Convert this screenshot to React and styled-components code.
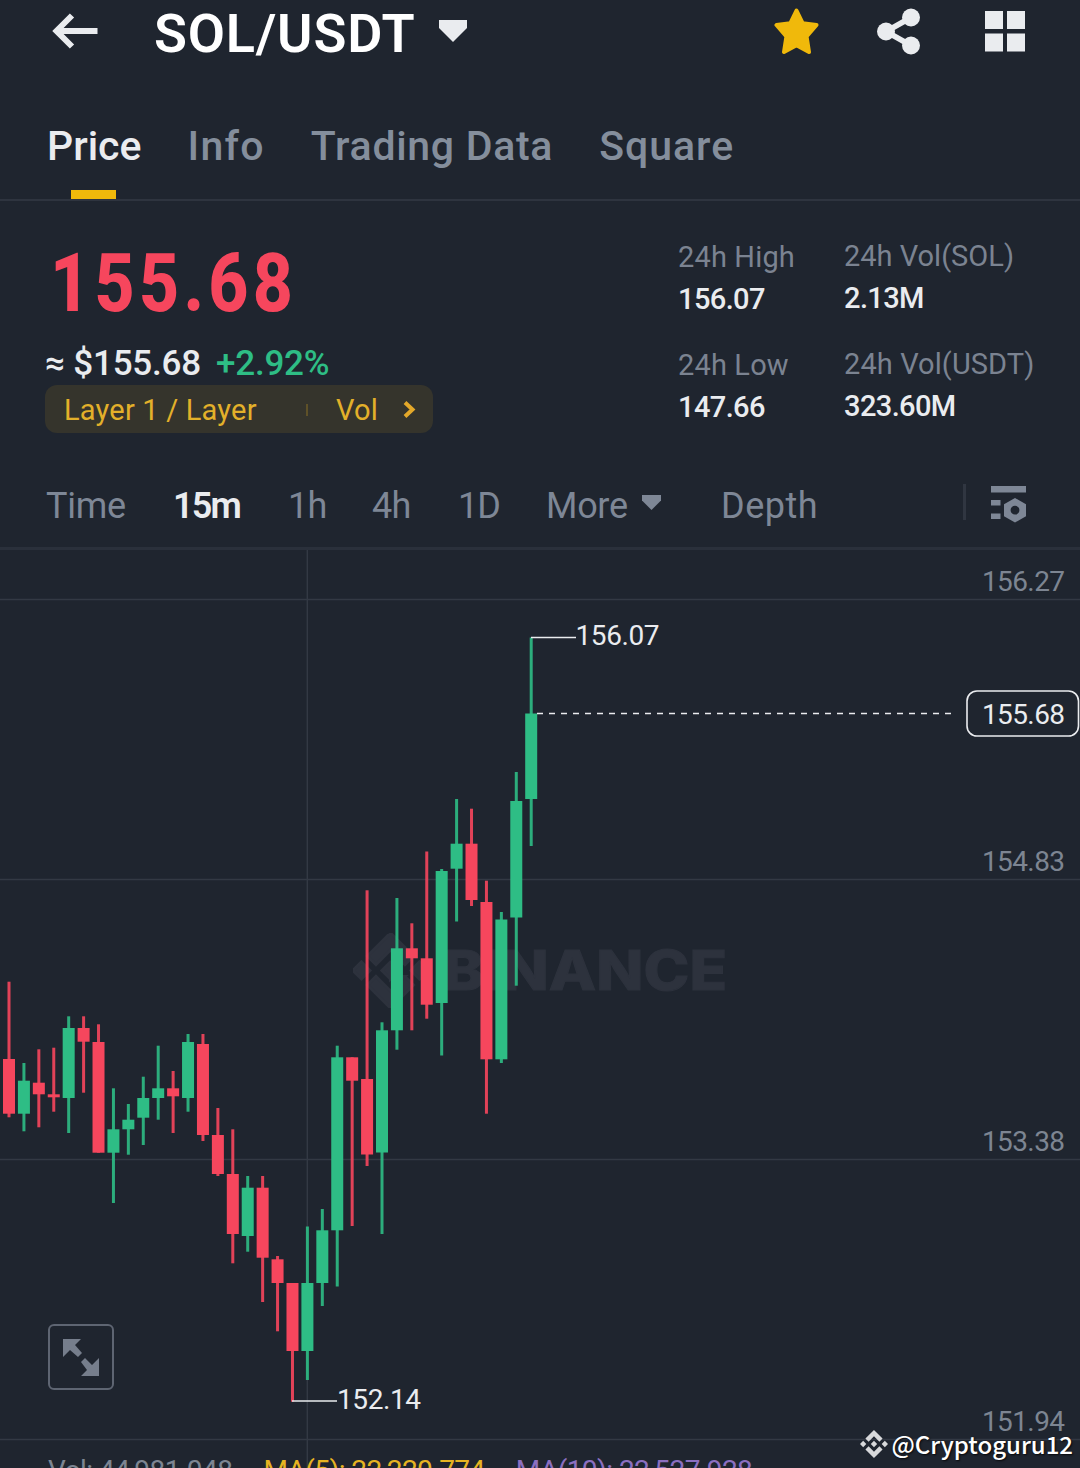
import React from 'react';
import styled, { createGlobalStyle } from 'styled-components';
import { SiBinance } from 'react-icons/si';

const GlobalStyle = createGlobalStyle`
  * {
    box-sizing: border-box;
  }
  body {
    margin: 0;
    background: #1f252f;
  }
`;

const Container = styled.div`
  display: flex;
  flex-direction: column;
  width: 1080px;
  height: 1468px;
  overflow: hidden;
  background: #1f252f;
  color: #eaecef;
  font-family: Roboto, 'Liberation Sans', sans-serif;
  white-space: nowrap;
`;

const Header = styled.header`
  display: flex;
  align-items: center;
  height: 92px;
  padding: 0 55px 30px 52px;
`;
const Pair = styled.h1`
  margin: 5px 23px 0 56px;
  color: #fff;
  font-size: 54px;
  font-weight: 600;
  line-height: 60px;
  letter-spacing: 0.8px;
`;
const Actions = styled.div`
  display: flex;
  align-items: center;
  margin-left: auto;
`;
const ActionIcon = styled.svg`
  display: block;
  margin-left: ${(props) => props.$gap || 0}px;
`;

const Tabs = styled.nav`
  display: flex;
  gap: 46px;
  height: 109px;
  padding-left: 47px;
  border-bottom: 2px solid #2e343f;
`;
const Tab = styled.div`
  position: relative;
  color: ${(props) => (props.$active ? '#eaecef' : '#848e9c')};
  font-size: 41px;
  font-weight: 500;
  line-height: 108px;
  letter-spacing: ${(props) => props.$spacing || 0}px;

  &::after {
    content: '';
    display: ${(props) => (props.$active ? 'block' : 'none')};
    position: absolute;
    bottom: 0;
    left: 24px;
    width: 45px;
    height: 9px;
    background: #f0b90b;
  }
`;

const Summary = styled.section`
  display: flex;
  justify-content: space-between;
  height: 259px;
  padding: 35px 46px 0 45px;
`;
const PriceBox = styled.div`
  padding-top: 6px;
`;
/* narrow figures with open spacing */
const LastPrice = styled.div`
  width: 300px;
  padding-left: 6px;
  color: #f6465d;
  font-size: 82px;
  font-weight: 800;
  line-height: 82px;
  letter-spacing: 5px;
  transform: scaleX(0.85);
  transform-origin: left;
`;
const Converted = styled.div`
  display: flex;
  gap: 15px;
  margin-top: 17px;
  padding-top: 1px;
  height: 44px;
  font-size: 35px;
  font-weight: 500;
  line-height: 44px;
  letter-spacing: -0.2px;
`;
const Change = styled.span`
  color: #2ebd85;
`;
const TagChip = styled.div`
  display: flex;
  align-items: center;
  width: 388px;
  height: 48px;
  padding: 1px 17px 0 19px;
  border-radius: 12px;
  background: #35342c;
  color: #e3b02a;
  font-size: 29px;
  letter-spacing: 0.2px;
`;
const ChipDivider = styled.span`
  width: 2px;
  height: 12px;
  margin: 0 28px 0 auto;
  background: #5f5128;
`;

const Stats = styled.div`
  display: grid;
  grid-template-columns: 166px 190px;
  row-gap: 24px;
  align-content: start;
  font-size: 29px;
  line-height: 42px;
`;
const Stat = styled.div`
  margin-top: ${(props) => (props.$raised ? '-1px' : '0')};
`;
const StatLabel = styled.div`
  color: #7b8391;
  letter-spacing: ${(props) => props.$spacing || 0}px;
`;
const StatValue = styled.div`
  font-weight: 500;
  letter-spacing: -0.6px;
`;

const Intervals = styled.div`
  display: flex;
  align-items: center;
  height: 90px;
  padding: 1px 54px 0 46px;
  border-bottom: 3px solid #2a303b;
  color: #7e8796;
  font-size: 36px;
`;
const Interval = styled.div`
  display: flex;
  align-items: center;
  gap: 14px;
  width: ${(props) => props.$width}px;
  padding-top: 4px;
  color: ${(props) => (props.$active ? '#eaecef' : 'inherit')};
  font-weight: ${(props) => (props.$active ? 600 : 400)};
  letter-spacing: ${(props) => props.$spacing || 0}px;

  svg {
    margin-bottom: 8px;
  }
`;
const Divider = styled.span`
  width: 3px;
  height: 36px;
  margin: 0 25px 4px auto;
  background: #303641;
`;

const ChartArea = styled.div`
  position: relative;
  flex: 1;
`;
const Plot = styled.svg`
  display: block;
  font-family: Roboto, 'Liberation Sans', sans-serif;
  font-size: 28px;
`;
const ExpandButton = styled.button`
  position: absolute;
  left: 48px;
  top: 774px;
  display: flex;
  align-items: center;
  justify-content: center;
  width: 66px;
  height: 66px;
  padding: 0;
  border: 2px solid #5e6572;
  border-radius: 6px;
  background: transparent;
`;
const VolumeRow = styled.div`
  position: absolute;
  left: 48px;
  top: 904px;
  display: flex;
  gap: 31px;
  font-size: 28px;
  line-height: 34px;
`;
const VolumeItem = styled.span`
  color: ${(props) => props.color};
  letter-spacing: -0.54px;
`;
const Handle = styled.div`
  position: absolute;
  right: 7px;
  top: 877px;
  display: flex;
  align-items: center;
  gap: 4px;
  color: #fff;
  font-family: 'Noto Sans CJK SC', 'Noto Sans', sans-serif;
  font-size: 24px;
  font-weight: 500;
  line-height: 34px;
  text-shadow: 1px 1px 2px rgba(0, 0, 0, 0.8);
`;

const GREEN = '#2ebd85';
const RED = '#f6465d';
const FIRST_X = 9;
const STEP = 14.92;

// [rising, high, body top, body bottom, low]
const candles = [
  [0, 981.7, 1059, 1113.7, 1117.3],
  [1, 1063, 1080.7, 1113.7, 1131.3],
  [0, 1049.3, 1082.7, 1094.3, 1127.3],
  [0, 1047.7, 1094.3, 1097.3, 1111.7],
  [1, 1016.3, 1028, 1098, 1133],
  [0, 1016.3, 1028, 1041.7, 1092.7],
  [0, 1024.3, 1042, 1152.7, 1152.7],
  [1, 1088.3, 1129.3, 1152.7, 1203],
  [1, 1104, 1119.7, 1129.3, 1154.7],
  [1, 1076.7, 1098, 1117.7, 1145],
  [1, 1045.7, 1088.3, 1098, 1119.7],
  [0, 1071, 1088.3, 1096.3, 1133],
  [1, 1034, 1042, 1098, 1111.7],
  [0, 1034, 1044, 1135, 1141],
  [0, 1108, 1135, 1174, 1176],
  [0, 1129.3, 1174, 1234, 1263.3],
  [1, 1176, 1187.7, 1236, 1251.7],
  [0, 1176, 1187.7, 1257.7, 1302],
  [0, 1256, 1259.3, 1283, 1331.3],
  [0, 1283, 1283, 1351, 1401.7],
  [1, 1226.5, 1283, 1351, 1380],
  [1, 1209, 1230.3, 1283, 1306],
  [1, 1045.7, 1057.3, 1230.3, 1286.5],
  [0, 1057.3, 1057.3, 1080.7, 1226],
  [0, 890.3, 1079, 1154.5, 1166],
  [1, 1022.3, 1030.3, 1152.5, 1234],
  [1, 898, 948.3, 1030.3, 1049.7],
  [0, 923.3, 948.3, 958.3, 1030.3],
  [0, 851.5, 958.3, 1004.7, 1018.7],
  [1, 869, 871, 1003, 1055.5],
  [1, 799, 843.7, 868.7, 921.5],
  [0, 808.7, 843.7, 900, 906],
  [0, 880.7, 902, 1059.3, 1113.7],
  [1, 912, 919.5, 1059.3, 1063],
  [1, 772, 801, 917.5, 985.7],
  [1, 637.5, 713.5, 799, 846],
];

const levels = [
  { y: 599.5, label: '156.27' },
  { y: 879.5, label: '154.83' },
  { y: 1159.5, label: '153.38' },
  { y: 1439.5, label: '151.94' },
];

const Candle = ({ index, data }) => {
  const [rising, high, top, bottom, low] = data;
  const x = FIRST_X + index * STEP;
  const color = rising ? GREEN : RED;
  return (
    <g fill={color}>
      <rect x={x - 1.5} y={high} width="3" height={low - high} opacity="0.9" />
      <rect x={x - 6} y={top} width="12" height={bottom - top} />
    </g>
  );
};

const Caret = ({ width, height, color }) => (
  <svg width={width} height={height} viewBox="0 0 28 22">
    <path d="M0 0h28v8L14 22 0 8z" fill={color} />
  </svg>
);

const Chart = () => (
  <Plot width="1080" height="918" viewBox="0 550 1080 918">
    <g stroke="#333944" strokeWidth="1.4">
      {levels.map((level) => (
        <line key={level.label} x1="0" x2="1080" y1={level.y} y2={level.y} />
      ))}
      <line x1="307.3" x2="307.3" y1="550" y2="1468" />
    </g>

    <g fill="#2d323d" stroke="#2d323d">
      <SiBinance x="353" y="933" size="75" color="#2d323d" strokeWidth="1" />
      <text
        x="443"
        y="990"
        fontFamily="Inter"
        fontSize="55"
        fontWeight="800"
        strokeWidth="1"
        textLength="284"
        lengthAdjust="spacingAndGlyphs"
      >
        BINANCE
      </text>
    </g>

    {candles.map((data, i) => (
      <Candle key={i} index={i} data={data} />
    ))}

    <g fill="#7d8592" textAnchor="end">
      {levels.map((level) => (
        <text key={level.label} x="1065" y={level.y - 8.5} textLength="83">
          {level.label}
        </text>
      ))}
    </g>

    <g stroke="#eaecef" strokeWidth="1.6">
      <line x1="531" x2="576" y1="637.5" y2="637.5" />
      <line x1="292" x2="337" y1="1401" y2="1401" />
      <line x1="537" x2="952" y1="713.5" y2="713.5" strokeDasharray="6 6" />
      <rect x="967" y="691" width="111.5" height="45" rx="10" fill="#1f252f" />
    </g>
    <g fill="#eaecef">
      <text x="575.5" y="645" textLength="84">
        156.07
      </text>
      <text x="337" y="1409" textLength="84">
        152.14
      </text>
      <text x="982" y="724" textLength="83">
        155.68
      </text>
    </g>
  </Plot>
);

const App = () => (
  <Container>
    <GlobalStyle />
    <Header>
      <svg width="46" height="36" viewBox="0 0 46 36">
        <path
          d="M45.5 18H6M20 2.5 4.5 18 20 33.5"
          fill="none"
          stroke="#eaecef"
          strokeWidth="6"
        />
      </svg>
      <Pair>SOL/USDT</Pair>
      <Caret width={28} height={22} color="#eaecef" />
      <Actions>
        <ActionIcon width="45" height="47" viewBox="0 0 45 47">
          <path
            d="M22.5 2.5 28.6 15.2 42.5 17 32.6 28.5 35 44 22.5 37.2 10 44 12.4 28.5 2.5 17 16.4 15.2z"
            fill="#f0b90b"
            stroke="#f0b90b"
            strokeWidth="4"
            strokeLinejoin="round"
          />
        </ActionIcon>
        <ActionIcon $gap={58} width="43" height="47" viewBox="0 0 43 47">
          <path
            d="M34 9.5 9 23.5l25 14"
            fill="none"
            stroke="#eaecef"
            strokeWidth="5.5"
          />
          <g fill="#eaecef">
            <circle cx="34" cy="9.5" r="9" />
            <circle cx="9" cy="23.5" r="9" />
            <circle cx="34" cy="37.5" r="9" />
          </g>
        </ActionIcon>
        <ActionIcon $gap={65} width="40" height="41" viewBox="0 0 40 41">
          <path
            d="M0 0h18v18H0zM22 0h18v18H22zM0 22.5h18v18H0zM22 22.5h18v18H22z"
            fill="#eaecef"
          />
        </ActionIcon>
      </Actions>
    </Header>

    <Tabs>
      <Tab $active>Price</Tab>
      <Tab $spacing={1.3}>Info</Tab>
      <Tab $spacing={0.7}>Trading Data</Tab>
      <Tab $spacing={1}>Square</Tab>
    </Tabs>

    <Summary>
      <PriceBox>
        <LastPrice>155.68</LastPrice>
        <Converted>
          <span>≈ $155.68</span>
          <Change>+2.92%</Change>
        </Converted>
        <TagChip>
          <span>Layer 1 / Layer</span>
          <ChipDivider />
          <span>Vol</span>
          <ActionIcon $gap={25} width="13" height="17" viewBox="0 0 13 17">
            <path
              d="M2 1.5 9.5 8.5 2 15.5"
              fill="none"
              stroke="#e3a82a"
              strokeWidth="4"
            />
          </ActionIcon>
        </TagChip>
      </PriceBox>
      <Stats>
        <Stat>
          <StatLabel $spacing={0.15}>24h High</StatLabel>
          <StatValue>156.07</StatValue>
        </Stat>
        <Stat $raised>
          <StatLabel>24h Vol(SOL)</StatLabel>
          <StatValue>2.13M</StatValue>
        </Stat>
        <Stat>
          <StatLabel $spacing={0.15}>24h Low</StatLabel>
          <StatValue>147.66</StatValue>
        </Stat>
        <Stat $raised>
          <StatLabel $spacing={0.1}>24h Vol(USDT)</StatLabel>
          <StatValue>323.60M</StatValue>
        </Stat>
      </Stats>
    </Summary>

    <Intervals>
      <Interval $width={127} $spacing={-0.3}>
        Time
      </Interval>
      <Interval $width={115} $spacing={-1.8} $active>
        15m
      </Interval>
      <Interval $width={84} $spacing={-0.8}>
        1h
      </Interval>
      <Interval $width={86} $spacing={-0.8}>
        4h
      </Interval>
      <Interval $width={88} $spacing={-1}>
        1D
      </Interval>
      <Interval $width={175} $spacing={-0.3}>
        More
        <Caret width={19} height={15} color="#7e8796" />
      </Interval>
      <Interval $width={100} $spacing={0.5}>
        Depth
      </Interval>
      <Divider />
      <svg width="35" height="37" viewBox="0 0 35 37">
        <path
          d="M0 0h35v6.5H0zM0 14h9.5v5.5H0zM0 27.5h9.5V33H0z"
          fill="#7e8796"
        />
        <path
          d="M24 12 35 18.2v12L24 36.5 13 30.2v-12zM24 19.8a4.4 4.4 0 1 0 0 8.8 4.4 4.4 0 0 0 0-8.8z"
          fill="#7e8796"
          fillRule="evenodd"
        />
      </svg>
    </Intervals>

    <ChartArea>
      <Chart />
      <ExpandButton aria-label="Expand chart">
        <svg width="36" height="37" viewBox="0 0 36 37">
          <path
            d="M0 0h18l-6 6 7 8-4 4-8-7-7 7zM36 37H18l6-6-6-8 4-4 7 7 7-7z"
            fill="#767e8c"
          />
        </svg>
      </ExpandButton>
      <VolumeRow>
        <VolumeItem color="#7d8592">Vol: 44,981.048</VolumeItem>
        <VolumeItem color="#e6b422">MA(5): 22,220.774</VolumeItem>
        <VolumeItem color="#8b6fc0">MA(10): 22,527.928</VolumeItem>
      </VolumeRow>
      <Handle>
        <SiBinance size={28} color="#d8d9db" />
        @Cryptoguru12
      </Handle>
    </ChartArea>
  </Container>
);

export default App;
